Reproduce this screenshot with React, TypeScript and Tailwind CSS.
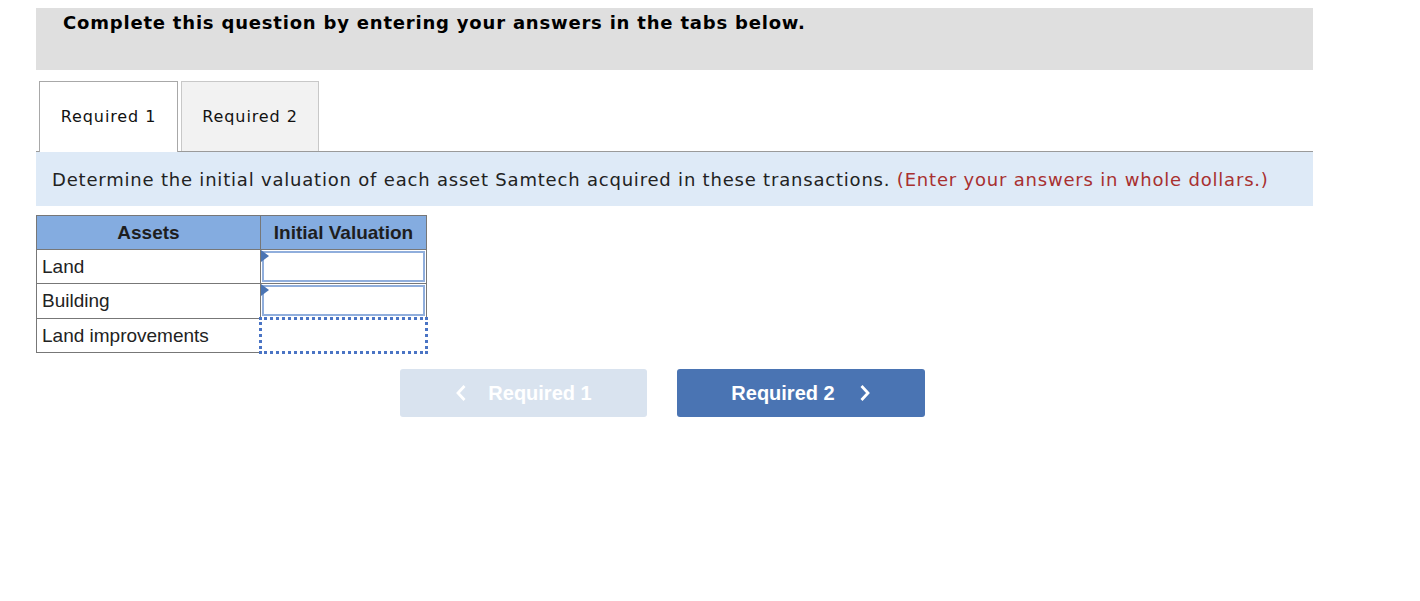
import React from 'react';

const verdana = { fontFamily: '"DejaVu Sans", Verdana, sans-serif' };
const arial = { fontFamily: '"Liberation Sans", Arial, sans-serif' };

const rows = ['Land', 'Building', 'Land improvements'];

const Marker = () => (
    <svg className="absolute left-0 top-0" width="8" height="12" viewBox="0 0 8 12">
        <polygon points="0,0 8,6 0,12" fill="#4a74b3" />
    </svg>
);

export default function App() {
    return (
        <div className="min-h-[601px] w-[1420px] bg-white pt-[8px]">
            <div className="ml-[36px] w-[1277px]">
                <div className="h-[62px] bg-[#dfdfdf] pl-[27px] pt-[4px]">
                    <div className="text-[18px] font-bold leading-[22px] tracking-[0.8px] text-black" style={verdana}>
                        Complete this question by entering your answers in the tabs below.
                    </div>
                </div>

                <div className="mt-[11px] flex h-[71px] items-end gap-[3px] border-b border-[#9a9a9a] pl-[3px]">
                    <div
                        className="-mb-px flex h-[71px] w-[139px] items-center justify-center border border-b-0 border-[#a8a8a8] bg-white text-[16px] tracking-[0.9px] text-[#111]"
                        style={verdana}
                    >
                        Required 1
                    </div>
                    <div
                        className="flex h-[70px] w-[138px] items-center justify-center border border-b-0 border-[#c8c8c8] bg-[#f2f2f2] pt-[1px] text-[16px] tracking-[0.9px] text-[#111]"
                        style={verdana}
                    >
                        Required 2
                    </div>
                </div>

                <div
                    className="flex h-[54px] items-center whitespace-pre bg-[#deeaf7] pl-[16px] text-[18px] tracking-[0.8px] text-[#222]"
                    style={verdana}
                >
                    <span>Determine the initial valuation of each asset Samtech acquired in these transactions. </span>
                    <span className="text-[#a83030]">(Enter your answers in whole dollars.)</span>
                </div>

                <table className="mt-[9px] border-collapse text-[19px]" style={arial}>
                    <thead>
                        <tr className="h-[34px] bg-[#84ace0] text-[#1e1e1e]">
                            <th className="w-[224px] border border-[#777] p-0 font-bold leading-[22px]">Assets</th>
                            <th className="w-[166px] border border-[#777] p-0 font-bold leading-[22px]">Initial Valuation</th>
                        </tr>
                    </thead>
                    <tbody>
                        {rows.map((r, i) => (
                            <tr key={r} className="h-[34px]">
                                <td className="border border-[#777] py-0 pl-[5px] leading-[22px] text-[#222]">{r}</td>
                                {i < 2 ? (
                                    <td className="relative border border-[#777] p-[1px]">
                                        <div className="h-[31px] w-full border-2 border-[#90aedc] bg-white" />
                                        <Marker />
                                    </td>
                                ) : (
                                    <td className="border-[3px] border-dotted border-[#4a74c4] p-0" />
                                )}
                            </tr>
                        ))}
                    </tbody>
                </table>

                <div className="mt-[15px] flex gap-[30px] pl-[364px]" style={arial}>
                    <button className="flex h-[48px] w-[247px] items-center justify-center gap-[21px] rounded-[3px] bg-[#d9e3ef] text-[20px] font-bold text-white">
                        <svg width="12" height="18" viewBox="0 0 12 18">
                            <polyline points="9.5,2 3,9 9.5,16" fill="none" stroke="white" strokeWidth="2.8" />
                        </svg>
                        <span>Required 1</span>
                    </button>
                    <button className="flex h-[48px] w-[248px] items-center justify-center gap-[24px] rounded-[3px] bg-[#4a74b3] text-[20px] font-bold text-white">
                        <span>Required 2</span>
                        <svg width="12" height="18" viewBox="0 0 12 18">
                            <polyline points="2.5,2 9,9 2.5,16" fill="none" stroke="white" strokeWidth="2.8" />
                        </svg>
                    </button>
                </div>
            </div>
        </div>
    );
}
